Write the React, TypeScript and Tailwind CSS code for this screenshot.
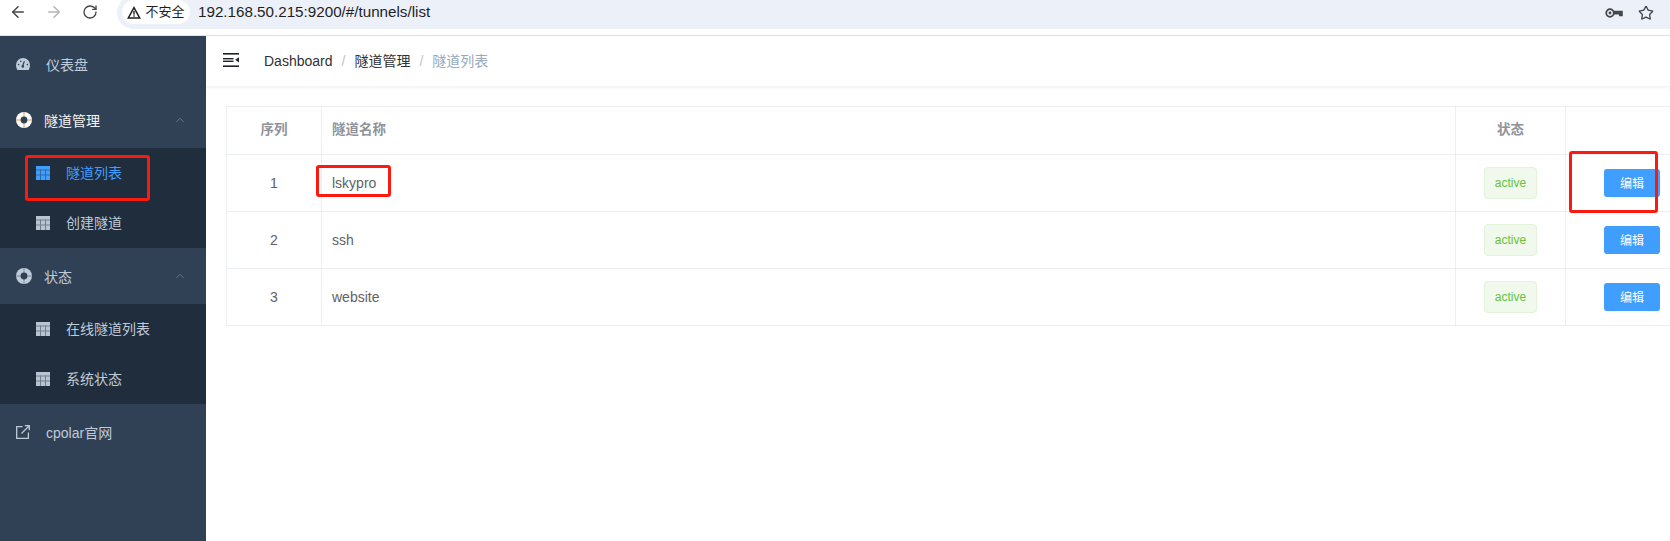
import React from 'react';
import { ArrowLeft, ArrowRight, RotateCw, Star, ChevronUp } from 'lucide-react';

const FONT = "font-['Liberation_Sans','Noto_Sans_CJK_SC',sans-serif]";

const TableIcon = ({ active }: { active?: boolean }) => (
    <svg width="14" height="14" viewBox="0 0 14 14" className="shrink-0">
        <rect width="14" height="14" fill={active ? '#409eff' : '#b9c4d1'} />
        <g fill="#1f2d3d" opacity="0.45">
            <rect x="0" y="3.5" width="14" height="1" />
            <rect x="0" y="8.5" width="14" height="1" />
            <rect x="4" y="3.5" width="1" height="10.5" />
            <rect x="9" y="3.5" width="1" height="10.5" />
        </g>
    </svg>
);

const GaugeIcon = () => (
    <svg width="14" height="12" viewBox="0 0 14 12" className="shrink-0">
        <path d="M0 7a7 7 0 0 1 14 0c0 1.9-.5 3.4-1.3 5H1.3C.5 10.4 0 8.9 0 7z" fill="#bfcbd9" />
        <path d="M6.6 8 8.4 3.2" stroke="#304156" strokeWidth="1.2" />
        <circle cx="6.8" cy="8.4" r="1.3" fill="#304156" />
        <circle cx="2.6" cy="6.6" r="0.8" fill="#304156" />
        <circle cx="4.8" cy="3.2" r="0.8" fill="#304156" />
        <circle cx="11.4" cy="6.6" r="0.8" fill="#304156" />
    </svg>
);

const RingIcon = ({ light }: { light?: boolean }) => (
    <svg width="16" height="16" viewBox="0 0 16 16" className="shrink-0">
        <circle cx="8" cy="8" r="8" fill={light ? '#ffffff' : '#bfcbd9'} />
        <path d="M7.3 0h1.4v5H7.3zM7.3 11h1.4v5H7.3zM0 7.3h5v1.4H0zM11 7.3h5v1.4h-5z" fill={light ? '#e8b98e' : '#8fa0b3'} />
        <circle cx="8" cy="8" r="3.4" fill="#304156" />
    </svg>
);

const LinkIcon = () => (
    <svg width="14" height="14" viewBox="0 0 14 14" fill="none" stroke="#bfcbd9" strokeWidth="1.3" className="shrink-0">
        <path d="M6.5 1.6H.7v11.7h11.7V7.5" />
        <path d="M5.5 8.5 13 1M8.8.7h4.5v4.5" />
    </svg>
);

const HamburgerIcon = () => (
    <svg width="16" height="14" viewBox="0 0 16 14" fill="#1f2328">
        <rect width="16" height="1.6" />
        <rect y="5" width="10.5" height="1.4" />
        <rect y="7.6" width="10.5" height="1.4" />
        <rect y="12.4" width="16" height="1.6" />
        <path d="M16 4.2v5.2L12.2 6.8z" />
    </svg>
);

const KeyIcon = () => (
    <svg width="18" height="10" viewBox="0 0 18 10" fill="none" className="shrink-0">
        <circle cx="5" cy="5" r="3.8" stroke="#44474a" strokeWidth="1.7" />
        <circle cx="5" cy="5" r="1.4" fill="#44474a" />
        <path d="M8.5 2.8H17.8V8.2H14V6.6H8.5z" fill="#44474a" />
    </svg>
);

const WarnIcon = () => (
    <svg width="14" height="13" viewBox="0 0 14 13" className="shrink-0">
        <path d="M7 1.6 12.7 12H1.3z" fill="none" stroke="#1f1f1f" strokeWidth="1.5" strokeLinejoin="miter" />
        <rect x="6.3" y="5" width="1.4" height="3.6" fill="#1f1f1f" />
        <rect x="6.3" y="9.3" width="1.4" height="1.4" fill="#1f1f1f" />
    </svg>
);

const SubItem = ({ label, active }: { label: string; active?: boolean }) => (
    <div className={`h-[50px] pl-[36px] flex items-center gap-[16px] text-[14px] ${active ? 'text-[#409eff]' : 'text-[#bfcbd9]'}`}>
        <span className="-mt-[1px]"><TableIcon active={active} /></span>
        <span className="pt-[1px]">{label}</span>
    </div>
);

const GroupTitle = ({ label, light }: { label: string; light?: boolean }) => (
    <div className={`h-[56px] pl-[16px] pr-[19px] flex items-center text-[14px] ${light ? 'text-[#f4f4f5]' : 'text-[#bfcbd9]'}`}>
        <RingIcon light={light} />
        <span className="ml-[12px] flex-1 pt-[2px]">{label}</span>
        <ChevronUp size={14} strokeWidth={1.2} className="text-[#7d8b9c]" />
    </div>
);

const rows = [
    { id: 1, name: 'lskypro' },
    { id: 2, name: 'ssh' },
    { id: 3, name: 'website' },
];

export default function App() {
    return (
        <div className={`relative w-[1670px] h-[541px] overflow-hidden bg-white ${FONT}`}>
            {/* Browser bar */}
            <div className="h-[36px] bg-white border-b border-[#e3e3e6] flex items-start overflow-hidden">
                <div className="flex items-center h-[24px] text-[#474747] pl-[9px]">
                    <ArrowLeft size={18} strokeWidth={2} />
                    <ArrowRight size={18} strokeWidth={2} className="ml-[18px] text-[#b5b5b5]" />
                    <RotateCw size={16} strokeWidth={2} className="ml-[19px]" />
                </div>
                <div className="ml-[19px] flex-1 -mt-[4px] h-[33px] rounded-l-full rounded-r-[16px] -mr-[1px] bg-[#ecf0f9] flex items-center pl-[5px] pr-[17px]">
                    <div className="h-[24px] mt-[-1px] w-[68px] bg-white rounded-full flex items-center justify-center gap-[4px] text-[13px] text-[#1f1f1f] self-end mb-[5px]">
                        <WarnIcon />
                        <span>不安全</span>
                    </div>
                    <span className="ml-[8px] text-[15.2px] text-[#1f1f1f] flex-1">192.168.50.215:9200/#/tunnels/list</span>
                    <KeyIcon />
                    <Star size={16} strokeWidth={2} className="ml-[15px] text-[#44474a]" />
                </div>
            </div>

            <div className="flex h-[505px]">
                {/* Sidebar */}
                <aside className="w-[206px] shrink-0 bg-[#304156]">
                    <div className="h-[56px] pl-[16px] flex items-center gap-[16px] text-[14px] text-[#bfcbd9]">
                        <GaugeIcon />
                        <span className="pt-[2px]">仪表盘</span>
                    </div>
                    <GroupTitle label="隧道管理" light />
                    <div className="bg-[#1f2d3d]">
                        <SubItem label="隧道列表" active />
                        <SubItem label="创建隧道" />
                    </div>
                    <GroupTitle label="状态" />
                    <div className="bg-[#1f2d3d]">
                        <SubItem label="在线隧道列表" />
                        <SubItem label="系统状态" />
                    </div>
                    <div className="h-[56px] pl-[16px] flex items-center gap-[16px] text-[14px] text-[#bfcbd9]">
                        <LinkIcon />
                        <span className="pt-[2px]">cpolar官网</span>
                    </div>
                </aside>

                {/* Main */}
                <main className="flex-1 min-w-0">
                    <div className="h-[50px] flex items-center pl-[17px] shadow-[0_1px_4px_rgba(0,21,41,0.08)] text-[14px]">
                        <span className="-mt-[2px]"><HamburgerIcon /></span>
                        <div className="ml-[25px] flex items-center text-[#303133]">
                            <span>Dashboard</span>
                            <span className="mx-[9px] text-[#c0c4cc]">/</span>
                            <span>隧道管理</span>
                            <span className="mx-[9px] text-[#c0c4cc]">/</span>
                            <span className="text-[#97a8be]">隧道列表</span>
                        </div>
                    </div>

                    <div className="pt-[20px] pl-[20px]">
                        <table className="w-[1450px] table-fixed border-collapse text-[14px] text-[#606266]">
                            <colgroup>
                                <col className="w-[95px]" />
                                <col />
                                <col className="w-[110px]" />
                                <col className="w-[110px]" />
                            </colgroup>
                            <thead>
                                <tr className="h-[48px] text-[#909399] font-bold text-[13.5px]">
                                    <th className="border border-[#ebeef5] font-bold">序列</th>
                                    <th className="border border-[#ebeef5] pl-[10px] text-left font-bold">隧道名称</th>
                                    <th className="border border-[#ebeef5] font-bold">状态</th>
                                    <th className="border border-[#ebeef5]"></th>
                                </tr>
                            </thead>
                            <tbody>
                                {rows.map((row) => (
                                    <tr key={row.id} className="h-[57px]">
                                        <td className="border border-[#ebeef5] text-center">{row.id}</td>
                                        <td className="border border-[#ebeef5] pl-[10px]">{row.name}</td>
                                        <td className="border border-[#ebeef5] text-center">
                                            <span className="inline-flex items-center justify-center w-[53px] h-[32px] rounded-[4px] border border-[#e1f3d8] bg-[#f0f9eb] text-[12px] text-[#67c23a]">active</span>
                                        </td>
                                        <td className="border border-[#ebeef5] pl-[38px]">
                                            <button className="w-[56px] h-[28px] pt-[2px] rounded-[3px] bg-[#409eff] text-white text-[12px] flex items-center justify-center">编辑</button>
                                        </td>
                                    </tr>
                                ))}
                            </tbody>
                        </table>
                    </div>
                </main>
            </div>

            {/* Red annotations */}
            <div className="absolute left-[25px] top-[155px] w-[125px] h-[46px] border-[3px] border-[#fb1a10] rounded-[3px]" />
            <div className="absolute left-[316px] top-[165px] w-[75px] h-[32px] border-[3px] border-[#fb1a10] rounded-[3px]" />
            <div className="absolute left-[1569px] top-[151px] w-[89px] h-[62px] border-[3px] border-[#fb1a10] rounded-[3px]" />
        </div>
    );
}
